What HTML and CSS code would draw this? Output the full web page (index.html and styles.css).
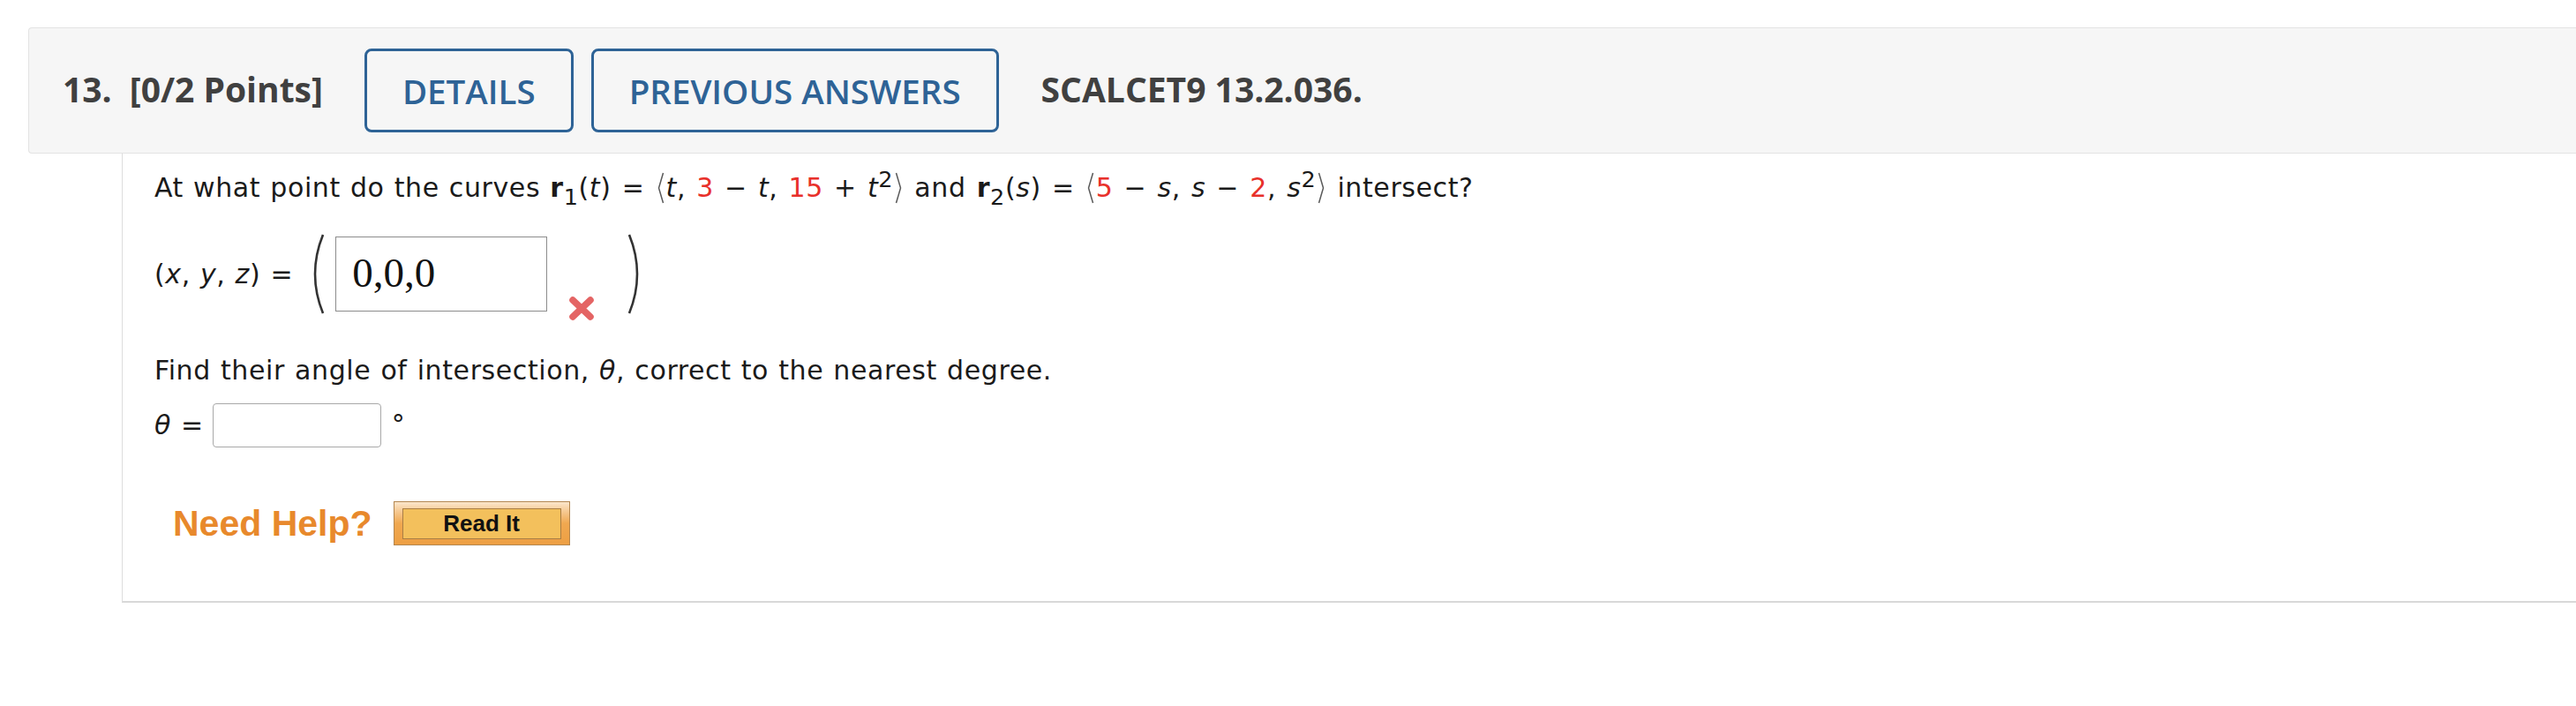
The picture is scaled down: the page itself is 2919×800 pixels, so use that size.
FILE: index.html
```html
<!DOCTYPE html>
<html lang="en">
<head>
<meta charset="utf-8">
<title>Question 13</title>
<link rel="stylesheet" href="styles.css">
</head>
<body>
<div class="page">
  <div class="qhead">
    <span class="qnum">13.</span>
    <span class="pts">[0/2 Points]</span>
    <button class="btn btn-first">DETAILS</button>
    <button class="btn">PREVIOUS ANSWERS</button>
    <span class="ref">SCALCET9 13.2.036.</span>
  </div>
  <div class="qbody">
    <p class="line l1">At what point do the curves <span class="m"><b>r</b><sub>1</sub>(<i>t</i>) = <svg class="ang" viewBox="0 0 8 36"><polyline points="6.5,1 1.5,18 6.5,35"/></svg><i>t</i>, <span class="red">3</span> − <i>t</i>, <span class="red">15</span> + <i>t</i><sup>2</sup><svg class="ang" viewBox="0 0 8 36"><polyline points="1.5,1 6.5,18 1.5,35"/></svg> and <b>r</b><sub>2</sub>(<i>s</i>) = <svg class="ang" viewBox="0 0 8 36"><polyline points="6.5,1 1.5,18 6.5,35"/></svg><span class="red">5</span> − <i>s</i>, <i>s</i> − <span class="red">2</span>, <i>s</i><sup>2</sup><svg class="ang" viewBox="0 0 8 36"><polyline points="1.5,1 6.5,18 1.5,35"/></svg> intersect?</span></p>
    <div class="row r2">
      <span class="lbl">(<i>x</i>, <i>y</i>, <i>z</i>) =</span>
      <svg class="paren" viewBox="0 0 20 93"><path d="M18 2 Q 0 46.5 18 91"/></svg>
      <div class="ans">0,0,0</div>
      <svg class="wrong" viewBox="0 0 32 31"><path d="M6 6 L26 25 M26 6 L6 25"/></svg>
      <svg class="paren rp" viewBox="0 0 20 93"><path d="M2 2 Q 20 46.5 2 91"/></svg>
    </div>
    <p class="line l3">Find their angle of intersection, <i>θ</i>, correct to the nearest degree.</p>
    <div class="row r4">
      <span class="lbl"><i>θ</i> =</span>
      <div class="blank"></div>
      <span class="deg">°</span>
    </div>
    <div class="row help">
      <span class="need">Need Help?</span>
      <div class="readit"><div class="readit-in">Read It</div></div>
    </div>
  </div>
</div>
</body>
</html>
```
FILE: styles.css
```css
html, body {
  margin: 0;
  padding: 0;
  background: #ffffff;
}
.page {
  padding: 31px 0 0 32px;
  overflow: hidden;
}
.qhead {
  display: flex;
  align-items: center;
  box-sizing: border-box;
  height: 143px;
  background: #f6f6f6;
  border: 1px solid #e3e3e3;
  border-right: none;
  border-radius: 4px 0 0 4px;
  padding-left: 38px;
  font-family: "Open Sans", "DejaVu Sans", sans-serif;
  font-size: 39px;
  color: #404040;
}
.qnum, .pts, .ref {
  font-weight: 700;
  line-height: 54px;
  margin-top: -3px;
}
.pts {
  margin-left: 20px;
}
.btn {
  box-sizing: border-box;
  height: 95px;
  margin: 0 0 0 20px;
  padding: 0 40px;
  border: 3px solid #2e6396;
  border-radius: 8px;
  background: #f6f6f6;
  color: #2e6396;
  font-family: "Open Sans", sans-serif;
  font-size: 38.5px;
  font-weight: 600;
}
.btn-first {
  margin-left: 47px;
}
.ref {
  margin-left: 48px;
}
.qbody {
  margin-left: 106px;
  border-left: 1px solid #dddddd;
  border-bottom: 2px solid #d8d8d8;
  padding: 19px 0 63px 36px;
  font-family: "DejaVu Sans", Verdana, sans-serif;
  font-size: 30px;
  letter-spacing: 0.6px;
  word-spacing: 1px;
  color: #1a1a1a;
}
.line {
  margin: 0;
  line-height: 40px;
  white-space: nowrap;
}
.line b {
  font-weight: 700;
}
.m {
  word-spacing: 2px;
}
sub, sup {
  line-height: 0;
  font-size: 0.85em;
}
sub {
  vertical-align: -0.35em;
}
sup {
  vertical-align: 0.45em;
}
.red {
  color: #e8302a;
}
.ang {
  width: 8px;
  height: 36px;
  vertical-align: -8px;
  margin: 0 2px;
}
.ang polyline {
  fill: none;
  stroke: #5a5a5a;
  stroke-width: 1.5;
}
.row {
  display: flex;
  align-items: center;
}
.r2 {
  margin-top: 31px;
  height: 93px;
}
.lbl {
  line-height: 40px;
  white-space: pre;
}
.paren {
  width: 20px;
  height: 93px;
  margin-left: 16px;
}
.paren path {
  fill: none;
  stroke: #333333;
  stroke-width: 2.6;
}
.rp {
  margin-left: 36px;
}
.ans {
  box-sizing: border-box;
  width: 240px;
  height: 85px;
  margin-left: 12px;
  border: 1px solid #8c8c8c;
  padding-left: 18px;
  font-family: "Liberation Serif", "Times New Roman", serif;
  font-size: 47px;
  letter-spacing: 0;
  line-height: 81px;
  color: #111111;
}
.wrong {
  width: 32px;
  height: 31px;
  margin-left: 23px;
  align-self: flex-end;
  margin-bottom: -8px;
}
.wrong path {
  fill: none;
  stroke: #e46464;
  stroke-width: 7.5;
  stroke-linecap: round;
}
.l3 {
  margin-top: 43px;
}
.r4 {
  margin-top: 17px;
  height: 50px;
}
.blank {
  box-sizing: border-box;
  width: 191px;
  height: 50px;
  margin-left: 10px;
  border: 1px solid #a8a8a8;
  border-radius: 4px;
  background: #ffffff;
}
.deg {
  align-self: flex-start;
  margin-left: 12px;
  line-height: 40px;
  margin-top: 4px;
}
.help {
  margin-top: 61px;
  height: 50px;
}
.need {
  margin-left: 21px;
  font-family: "Liberation Sans", Arial, sans-serif;
  font-weight: 700;
  font-size: 41px;
  letter-spacing: 0;
  word-spacing: 0;
  line-height: 46px;
  color: #e8892c;
}
.readit {
  box-sizing: border-box;
  width: 200px;
  height: 50px;
  margin-left: 24px;
  padding: 7px 9px 6px 9px;
  border: 1px solid #b3864f;
  background: linear-gradient(#fbe6cc 0%, #f6c992 22%, #f0a850 50%, #ed9f43 100%);
}
.readit-in {
  box-sizing: border-box;
  height: 35px;
  border: 1px solid #a97d45;
  background: #f3c05c;
  font-family: "Liberation Sans", Arial, sans-serif;
  font-weight: 700;
  font-size: 26px;
  letter-spacing: 0;
  word-spacing: 0;
  line-height: 33px;
  text-align: center;
  color: #111111;
}
```
